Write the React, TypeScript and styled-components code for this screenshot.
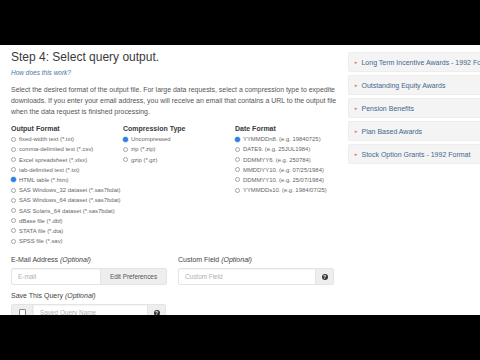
import React from "react";
import styled, { createGlobalStyle } from "styled-components";

const Global = createGlobalStyle`
  html, body { margin: 0; padding: 0; background: #000; }
  body { width: 480px; height: 360px; overflow: hidden; font-family: "Liberation Sans", Arial, sans-serif; }
`;

const Frame = styled.div`
  width: 480px;
  height: 360px;
  display: flex;
  flex-direction: column;
  background: #000;
`;

const Letterbox = styled.div`
  height: 45px;
  flex: none;
  background: #000;
`;

const Screen = styled.div`
  height: 270px;
  flex: none;
  background: #fff;
  display: flex;
  overflow: hidden;
`;

const Main = styled.div`
  width: 337px;
  flex: none;
  padding: 6px 0 0 11px;
  box-sizing: border-box;
  color: #333;
`;

const Title = styled.h1`
  margin: 0;
  font-size: 12px;
  line-height: 13px;
  font-weight: 400;
  color: #3a3a3a;
`;

const HelpLink = styled.a`
  display: block;
  margin-top: 5px;
  font-size: 6.5px;
  line-height: 8px;
  font-style: italic;
  color: #4a76a3;
  text-decoration: none;
`;

const Intro = styled.p`
  margin: 7px 0 0 0;
  width: 330px;
  font-size: 6.95px;
  line-height: 11.2px;
  color: #555;
`;

const Columns = styled.div`
  display: grid;
  grid-template-columns: 112px 112px auto;
  margin-top: 6px;
`;

const Column = styled.div`
  display: flex;
  flex-direction: column;
`;

const ColumnHead = styled.div`
  font-size: 7px;
  line-height: 10px;
  font-weight: 700;
  color: #3a3a3a;
  margin-bottom: 0.5px;
`;

const Option = styled.label`
  display: flex;
  align-items: center;
  gap: 3px;
  height: 10.2px;
  font-size: 5.9px;
  color: #666;
  white-space: nowrap;
`;

const Radio = styled.span<{ $on?: boolean }>`
  width: 5px;
  height: 5px;
  flex: none;
  border-radius: 50%;
  box-sizing: border-box;
  border: 1px solid ${(p) => (p.$on ? "#2f7fe0" : "#a5a5a5")};
  background: ${(p) => (p.$on ? "#2f7fe0" : "#fff")};
  box-shadow: ${(p) => (p.$on ? "0 0 0 0.5px #8fbaf0" : "none")};
`;

const Fields = styled.div`
  display: grid;
  grid-template-columns: 156px 156px;
  column-gap: 11px;
  margin-top: 9px;
`;

const Field = styled.div`
  display: flex;
  flex-direction: column;
`;

const Label = styled.div`
  font-size: 7px;
  line-height: 9px;
  color: #444;
  margin-bottom: 4px;
  em { font-style: italic; }
`;

const Group = styled.div<{ $w?: number }>`
  display: flex;
  height: 17px;
  width: ${(p) => (p.$w ? `${p.$w}px` : "auto")};
  border: 1px solid #e4e4e4;
  border-radius: 2px;
  box-sizing: border-box;
  box-shadow: inset 0 1px 1px rgba(0,0,0,0.04);
  background: #fff;
`;

const Input = styled.div<{ $divided?: boolean }>`
  flex: 1;
  display: flex;
  align-items: center;
  padding-left: 6px;
  font-size: 6.4px;
  color: #b0b0b0;
  border-left: ${(p) => (p.$divided ? "1px solid #f0f0f0" : "none")};
`;

const Addon = styled.div<{ $w: number }>`
  flex: none;
  width: ${(p) => p.$w}px;
  background: #eeeeee;
  display: flex;
  align-items: center;
  justify-content: center;
  font-size: 6.4px;
  color: #555;
  border-left: 1px solid #e4e4e4;
  &:first-child { border-left: none; border-right: 1px solid #e4e4e4; }
`;

const Check = styled.span`
  width: 5px;
  height: 5px;
  border: 1px solid #888;
  border-radius: 1px;
  background: #fff;
`;

const Q = styled.span`
  width: 6px;
  height: 6px;
  border-radius: 50%;
  background: #333;
  color: #fff;
  font-size: 5px;
  font-weight: 700;
  line-height: 6px;
  text-align: center;
`;

const SaveField = styled.div`
  margin-top: 6px;
  display: flex;
  flex-direction: column;
`;

const Sidebar = styled.div`
  flex: 1;
  padding: 7px 0 0 11px;
  display: flex;
  flex-direction: column;
  gap: 3px;
`;

const SideItem = styled.div`
  height: 20px;
  display: flex;
  align-items: center;
  gap: 3px;
  padding-left: 5px;
  background: #f4f4f4;
  border: 1px solid #ededed;
  border-right: none;
  border-radius: 2px 0 0 2px;
  box-sizing: border-box;
  font-size: 7px;
  color: #44668e;
  white-space: nowrap;
  overflow: hidden;
`;

const Arrow = styled.span`
  font-size: 4.5px;
  color: #e07a7a;
`;

const outputs = [
  "fixed-width text (*.txt)",
  "comma-delimited text (*.csv)",
  "Excel spreadsheet (*.xlsx)",
  "tab-delimited text (*.txt)",
  "HTML table (*.htm)",
  "SAS Windows_32 dataset (*.sas7bdat)",
  "SAS Windows_64 dataset (*.sas7bdat)",
  "SAS Solaris_64 dataset (*.sas7bdat)",
  "dBase file (*.dbf)",
  "STATA file (*.dta)",
  "SPSS file (*.sav)",
];
const compressions = ["Uncompressed", "zip (*.zip)", "gzip (*.gz)"];
const dates = [
  "YYMMDDn8. (e.g. 19840725)",
  "DATE9. (e.g. 25JUL1984)",
  "DDMMYY6. (e.g. 250784)",
  "MMDDYY10. (e.g. 07/25/1984)",
  "DDMMYY10. (e.g. 25/07/1984)",
  "YYMMDDs10. (e.g. 1984/07/25)",
];
const side = [
  "Long Term Incentive Awards - 1992 Format",
  "Outstanding Equity Awards",
  "Pension Benefits",
  "Plan Based Awards",
  "Stock Option Grants - 1992 Format",
];

const OptionList = ({ head, items, on }: { head: string; items: string[]; on: number }) => (
  <Column>
    <ColumnHead>{head}</ColumnHead>
    {items.map((t, i) => (
      <Option key={t}>
        <Radio $on={i === on} />
        {t}
      </Option>
    ))}
  </Column>
);

export default function App() {
  return (
    <>
      <Global />
      <Frame>
        <Letterbox />
        <Screen>
          <Main>
            <Title>Step 4: Select query output.</Title>
            <HelpLink>How does this work?</HelpLink>
            <Intro>
              Select the desired format of the output file. For large data requests, select a compression type to expedite
              downloads. If you enter your email address, you will receive an email that contains a URL to the output
              file when the data request is finished processing.
            </Intro>
            <Columns>
              <OptionList head="Output Format" items={outputs} on={4} />
              <OptionList head="Compression Type" items={compressions} on={0} />
              <OptionList head="Date Format" items={dates} on={0} />
            </Columns>
            <Fields>
              <Field>
                <Label>
                  E-Mail Address <em>(Optional)</em>
                </Label>
                <Group>
                  <Input>E-mail</Input>
                  <Addon $w={65}>Edit Preferences</Addon>
                </Group>
              </Field>
              <Field>
                <Label>
                  Custom Field <em>(Optional)</em>
                </Label>
                <Group>
                  <Input>Custom Field</Input>
                  <Addon $w={17}>
                    <Q>?</Q>
                  </Addon>
                </Group>
              </Field>
            </Fields>
            <SaveField>
              <Label>
                Save This Query <em>(Optional)</em>
              </Label>
              <Group $w={155}>
                <Addon $w={20}>
                  <Check />
                </Addon>
                <Input $divided>Saved Query Name</Input>
                <Addon $w={17}>
                  <Q>?</Q>
                </Addon>
              </Group>
            </SaveField>
          </Main>
          <Sidebar>
            {side.map((s) => (
              <SideItem key={s}>
                <Arrow>►</Arrow>
                {s}
              </SideItem>
            ))}
          </Sidebar>
        </Screen>
        <Letterbox />
      </Frame>
    </>
  );
}
